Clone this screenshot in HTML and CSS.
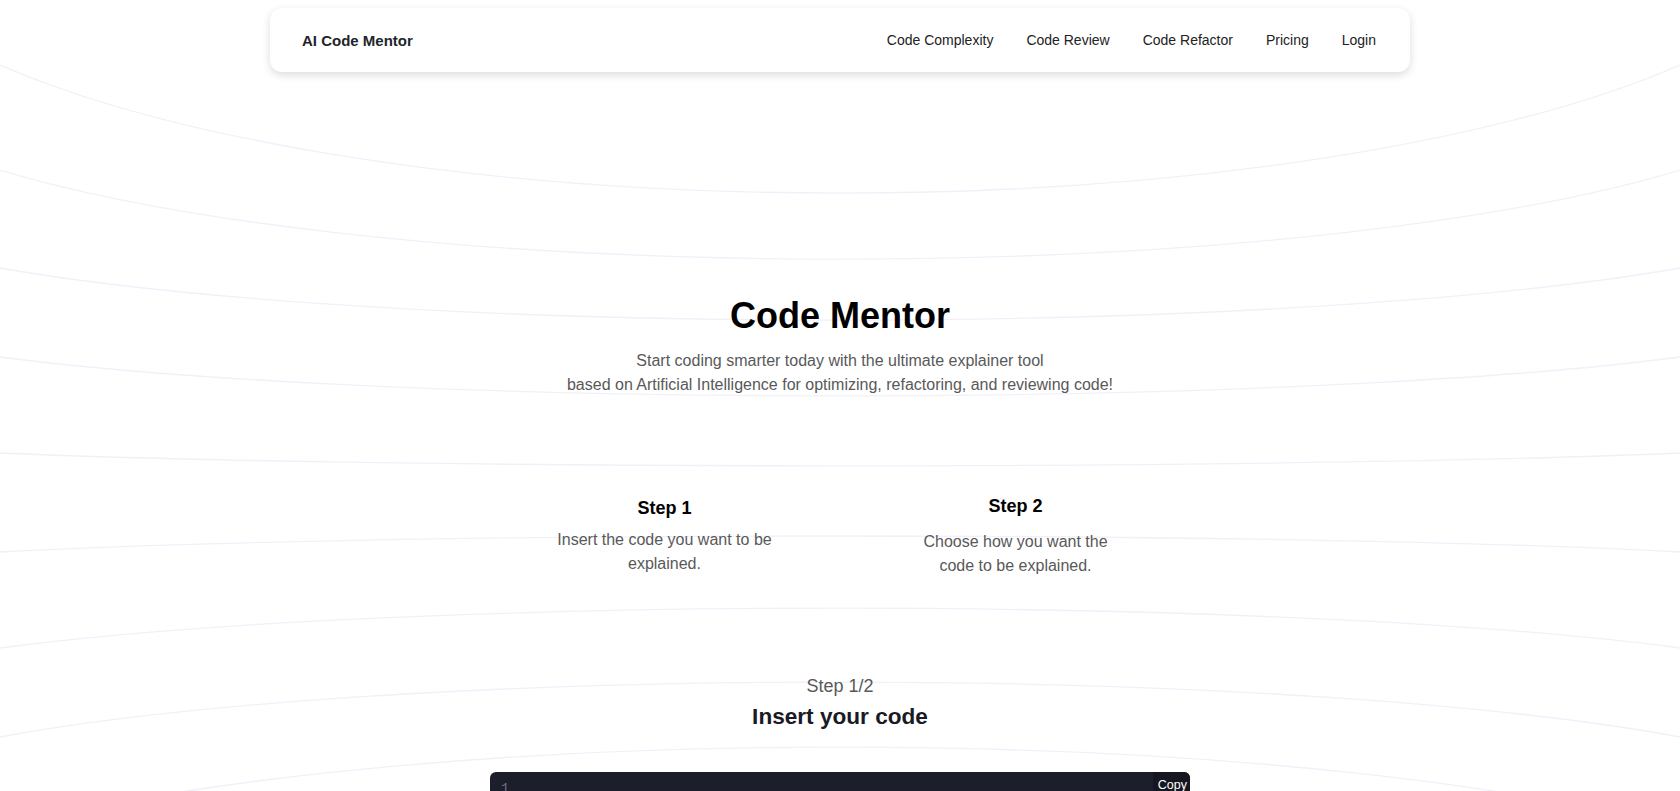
FILE: index.html
```html
<!DOCTYPE html>
<html lang="en">
<head>
    <meta charset="UTF-8">
    <meta name="viewport" content="width=device-width, initial-scale=1.0">
    <title>AI Code Mentor</title>
    <link rel="stylesheet" href="styles.css">
</head>
<body>

<!-- faint arcs behind the page -->
<svg class="backdrop" viewBox="0 0 1680 900" preserveAspectRatio="none" aria-hidden="true">
    <g fill="none" stroke="#f0f0fa" stroke-width="1.3">
        <path d="M0 65 A1000 280 0 0 0 1680 65"/>
        <path d="M0 170 A1000 195 0 0 0 1680 170"/>
        <path d="M0 268 A1000 114 0 0 0 1680 268"/>
        <path d="M0 357 A1000 85 0 0 0 1680 357"/>
        <path d="M0 453 A1000 28 0 0 0 1680 453"/>
        <path d="M0 552 A1000 35 0 0 1 1680 552"/>
        <path d="M0 648 A1000 87 0 0 1 1680 648"/>
        <path d="M0 737 A1000 120 0 0 1 1680 737"/>
        <path d="M0 830 A1000 181 0 0 1 1680 830"/>
    </g>
</svg>

<div class="page">
    <header class="topbar">
        <nav class="navbar">
            <a class="brand" href="#">AI Code Mentor</a>
            <ul class="nav-links">
                <li><a href="#">Code Complexity</a></li>
                <li><a href="#">Code Review</a></li>
                <li><a href="#">Code Refactor</a></li>
                <li><a href="#">Pricing</a></li>
                <li><a href="#">Login</a></li>
            </ul>
        </nav>
    </header>

    <section class="hero">
        <h1>Code Mentor</h1>
        <p class="lead">
            Start coding smarter today with the ultimate explainer tool<br>
            based on Artificial Intelligence for optimizing, refactoring, and reviewing code!
        </p>
    </section>

    <section class="steps">
        <div class="step">
            <h3>Step 1</h3>
            <p>Insert the code you want to be explained.</p>
        </div>
        <div class="step step-two">
            <h3>Step 2</h3>
            <p>Choose how you want the code to be explained.</p>
        </div>
    </section>

    <section class="insert">
        <div class="step-count">Step 1/2</div>
        <h2>Insert your code</h2>

        <div class="editor">
            <button class="copy-btn" type="button">Copy</button>
            <div class="editor-lines">
                <span class="line-no">1</span>
            </div>
        </div>
    </section>
</div>

</body>
</html>
```

FILE: styles.css
```css
body {
    font-family: "Liberation Sans", Arial, sans-serif;
    margin: 0;
    padding: 0;
    background-color: #fff;
    color: #000;
    position: relative;
    overflow: hidden;
}

.backdrop {
    position: absolute;
    top: 0;
    left: 0;
    width: 100%;
    height: 900px;
    z-index: 0;
}

.page {
    position: relative;
    z-index: 1;
}

/* navbar */
.topbar {
    padding-top: 8px;
}

.navbar {
    width: 1140px;
    height: 64px;
    margin: 0 auto;
    box-sizing: border-box;
    padding: 0 34px 0 32px;
    display: flex;
    align-items: center;
    justify-content: space-between;
    background-color: #fff;
    border-radius: 12px;
    box-shadow: 0 3px 9px rgba(0, 0, 0, 0.14);
}

.brand {
    font-size: 15px;
    font-weight: bold;
    color: #212529;
    text-decoration: none;
}

.nav-links {
    list-style: none;
    margin: 0;
    padding: 0;
    display: flex;
    gap: 33px;
}

.nav-links a {
    font-size: 14px;
    color: #222;
    text-decoration: none;
}

/* hero */
.hero {
    padding-top: 222px;
    text-align: center;
}

.hero h1 {
    margin: 0;
    font-size: 36px;
    line-height: 44px;
    font-weight: bold;
    color: #000;
}

.lead {
    margin: 11px 0 0;
    font-size: 16px;
    line-height: 24px;
    color: #595959;
}

/* steps */
.steps {
    margin-top: 99px;
    display: flex;
    justify-content: center;
    gap: 131px;
    text-align: center;
}

.step {
    width: 220px;
}

.step h3 {
    margin: 0;
    font-size: 18px;
    line-height: 24px;
    font-weight: bold;
}

.step p {
    margin: 8px 0 0;
    font-size: 16px;
    line-height: 24px;
    color: #595959;
}

.step-two h3 {
    margin-top: -2px;
}

.step-two p {
    margin-top: 12px;
}

/* insert code */
.insert {
    margin-top: 96px;
    text-align: center;
}

.step-count {
    font-size: 18px;
    line-height: 24px;
    color: #595959;
}

.insert h2 {
    margin: 4px 0 0;
    font-size: 22.6px;
    line-height: 30px;
    font-weight: bold;
    color: #1a1a24;
}

.editor {
    position: relative;
    width: 700px;
    min-height: 300px;
    margin: 40px auto 0;
    background-color: #1d1e2c;
    border-radius: 6px;
    text-align: left;
}

.editor-lines {
    padding: 7px 0 0 11px;
    font-family: "Liberation Mono", "DejaVu Sans Mono", monospace;
    font-size: 14px;
    line-height: 20px;
}

.line-no {
    color: #6e7080;
}

.copy-btn {
    position: absolute;
    top: 0;
    right: 0;
    padding: 5px 3px 5px 5px;
    border: none;
    border-radius: 0 6px 0 0;
    background-color: #15161f;
    color: #fff;
    font-family: "Liberation Sans", Arial, sans-serif;
    font-size: 12.5px;
    line-height: 16px;
    cursor: pointer;
}
```
